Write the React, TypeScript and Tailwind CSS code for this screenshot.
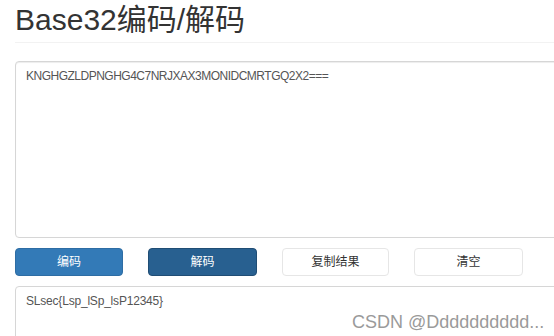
export default function App() {
  const font = { fontFamily: '"Liberation Sans", "Noto Sans CJK SC", sans-serif' };
  return (
    <div style={font} className="relative w-[554px] h-[336px] overflow-hidden bg-white">
      <div className="w-[620px] pl-[15px]">
        <h1 className="pt-[3px] text-[30px] leading-[34px] text-[#333]">Base32编码/解码</h1>
        <div className="mt-[5px] h-px bg-[#f2f2f2]" />
        <div className="mt-[18px] h-[177px] rounded-[4px] border border-[#d6d6d6] px-[10px] py-[6px] text-[12px] leading-[17px] tracking-[-0.5px] text-[#555] shadow-[inset_0_1px_1px_rgba(0,0,0,0.075)]">
          KNGHGZLDPNGHG4C7NRJXAX3MONIDCMRTGQ2X2===
        </div>
        <div className="mt-[10px] flex gap-[25px]">
          <button className="h-[28px] w-[108px] rounded-[4px] border border-[#2e6da4] bg-[#337ab7] text-[12px] text-white">编码</button>
          <button className="h-[28px] w-[109px] rounded-[4px] border border-[#204d74] bg-[#286090] text-[12px] text-white">解码</button>
          <button className="h-[28px] w-[107px] rounded-[4px] border border-[#e6e6e6] bg-white text-[12px] text-[#333]">复制结果</button>
          <button className="h-[28px] w-[109px] rounded-[4px] border border-[#e6e6e6] bg-white text-[12px] text-[#333]">清空</button>
        </div>
        <div className="mt-[10px] h-[80px] rounded-[4px] border border-[#d6d6d6] px-[10px] py-[6px] text-[12px] leading-[17px] tracking-[-0.2px] text-[#555]">
          SLsec{'{'}Lsp_lSp_lsP12345{'}'}
        </div>
      </div>
      <div className="absolute left-[352px] top-[311px] text-[18px] leading-[22px] text-[#9a9a9a]">CSDN @Dddddddddd...</div>
    </div>
  );
}
